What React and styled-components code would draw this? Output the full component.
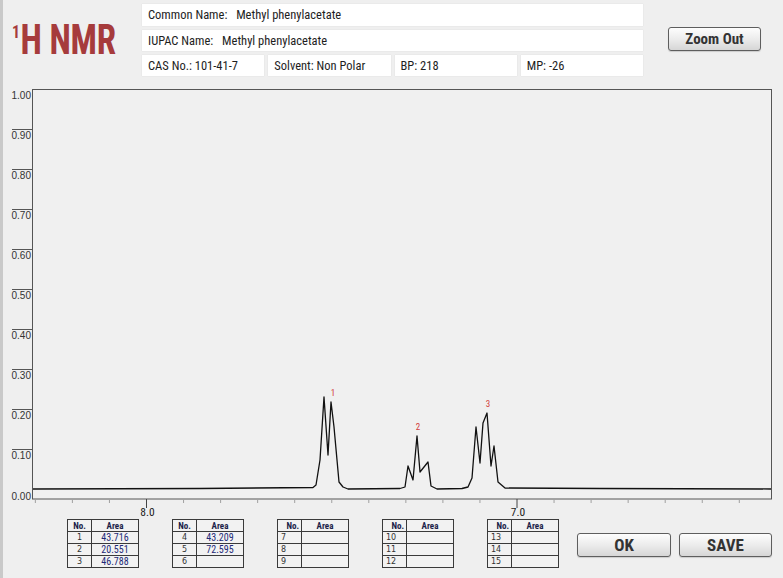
import React from 'react';
import styled, { createGlobalStyle } from 'styled-components';

const GlobalStyle = createGlobalStyle`
  html, body {
    margin: 0;
    padding: 0;
    background: #eeeeee;
  }
  body {
    font-family: "Liberation Sans Narrow", "Roboto Condensed", "Liberation Sans", sans-serif;
  }
`;

const NARROW = '"Liberation Sans Narrow", "Roboto Condensed", "Liberation Sans", sans-serif';

const Page = styled.div`
  width: 783px;
  height: 578px;
  background: #efefef;
  box-shadow: inset 3px 0 0 #c9c9c9;
  overflow: hidden;
  font-family: ${NARROW};
`;

const Header = styled.div`
  display: flex;
  padding-top: 4px;
  height: 76px;
  box-sizing: border-box;
`;

const TitleBox = styled.div`
  width: 142px;
  padding: 15px 0 0 12px;
  box-sizing: border-box;
`;

const Title = styled.h1`
  display: inline-block;
  margin: 0;
  font-family: ${NARROW};
  font-weight: 700;
  font-size: 42px;
  line-height: 42px;
  color: #a63b3c;
  letter-spacing: -0.3px;
  white-space: nowrap;
  transform: scaleX(0.83);
  transform-origin: left center;
`;

const Sup = styled.span`
  font-size: 19px;
  vertical-align: 16px;
  line-height: 0;
  margin-right: 1px;
`;

const Fields = styled.div`
  width: 501px;
  display: flex;
  flex-direction: column;
  gap: 4px;
`;

const FieldRow = styled.div`
  display: flex;
  gap: 4px;
`;

const Field = styled.div`
  flex: 1;
  height: 21px;
  background: #ffffff;
  box-shadow: 0 0 1px 0 #d6d6d6;
  padding-left: 6px;
  font-size: 12.5px;
  line-height: 22px;
  color: #1e1e1e;
  white-space: nowrap;
  overflow: hidden;
`;

const Label = styled.span`
  margin-right: 6px;
`;

const Button = styled.button`
  font-family: ${NARROW};
  font-weight: 700;
  color: #333;
  background: linear-gradient(#fdfdfd, #ececec 50%, #d6d6d6);
  border: 1px solid #5e5e5e;
  border-radius: 3px;
  box-shadow: 0 1px 1px rgba(0, 0, 0, 0.15);
  padding: 0;
  cursor: pointer;
  width: ${p => p.$w}px;
  height: ${p => p.$h}px;
  font-size: ${p => p.$fs}px;
`;

const ZoomWrap = styled.div`
  margin: 23px 0 0 25px;
`;

const Chart = styled.svg`
  display: block;
  margin-top: 4px;
`;

const Bottom = styled.div`
  display: flex;
  align-items: flex-start;
  padding-left: 67px;
  margin-top: 1px;
`;

const Tables = styled.div`
  display: flex;
  gap: 33px;
`;

const Table = styled.table`
  width: 72px;
  border-collapse: collapse;
  table-layout: fixed;
  background: #f2f2f2;
`;

const Th = styled.th`
  border: 1px solid #3a3a3a;
  height: 11px;
  padding: 0 2px;
  font-size: 9px;
  line-height: 10px;
  font-weight: 700;
  color: #1c1f4a;
  text-align: ${p => p.$align || 'center'};
`;

const NoCell = styled.td`
  border: 1px solid #3a3a3a;
  height: 11px;
  padding: 0 3px;
  font-family: "DejaVu Sans", "Liberation Sans", sans-serif;
  font-size: 8px;
  line-height: 10px;
  color: #333;
  text-align: ${p => p.$align || 'center'};
`;

const AreaCell = styled.td`
  border: 1px solid #3a3a3a;
  height: 11px;
  padding: 0;
  font-size: 10px;
  line-height: 10px;
  color: #1d2a78;
  text-align: center;
`;

const Actions = styled.div`
  display: flex;
  gap: 8px;
  margin: 14px 0 0 18px;
`;

const yToPx = v => 489 - v * 400;
const ppmToX = ppm => 146.5 + (8.0 - ppm) * 370.5;

const spectrum = [
  [33, 489], [200, 488.5], [313, 487.5], [316, 485], [320, 460], [324, 397],
  [328, 455], [331, 402], [334, 427], [339, 482], [343, 487], [348, 489],
  [400, 488.5], [405, 487], [408, 466], [413, 480], [417, 436], [420, 472],
  [428, 462], [431, 486], [437, 489], [462, 488.5], [468, 487], [472, 478],
  [476, 427], [480, 463], [483, 423], [487, 413], [491, 466], [494, 446],
  [498, 482], [505, 488], [600, 488.5], [771, 489],
];

const peakLabels = [
  { n: 1, x: 333, y: 396 },
  { n: 2, x: 418, y: 430 },
  { n: 3, x: 488, y: 407 },
];

const yTicks = [1.0, 0.9, 0.8, 0.7, 0.6, 0.5, 0.4, 0.3, 0.2, 0.1, 0.0];

const tables = [
  { rows: [[1, '43.716'], [2, '20.551'], [3, '46.788']], align: 'center' },
  { rows: [[4, '43.209'], [5, '72.595'], [6, '']], align: 'center' },
  { rows: [[7, ''], [8, ''], [9, '']], align: 'left' },
  { rows: [[10, ''], [11, ''], [12, '']], align: 'left' },
  { rows: [[13, ''], [14, ''], [15, '']], align: 'left' },
];

const Spectrum = () => {
  const ticks = [];
  for (let i = -3; i <= 16; i++) ticks.push(i);
  return (
    <Chart width="783" height="438" viewBox="0 80 783 438">
      <rect x="32.5" y="89.5" width="739" height="409.5" fill="#f0f0f0" stroke="#555" strokeWidth="1" />
      {yTicks.map(v => (
        <g key={v}>
          {v > 0 && v < 1 && (
            <line x1="12" x2="32" y1={yToPx(v) + 0.5} y2={yToPx(v) + 0.5} stroke="#555" strokeWidth="1" />
          )}
          <text
            x="31"
            y={yToPx(v) + (v === 0 ? 11 : 10)}
            textAnchor="end"
            fontFamily='"Liberation Sans", Arial, sans-serif'
            fontSize="10"
            fill="#333"
          >
            {v.toFixed(2)}
          </text>
        </g>
      ))}
      {ticks.map(i => {
        const x = ppmToX(8.0 - i * 0.1);
        const major = i === 0 || i === 10;
        return (
          <line
            key={i}
            x1={x}
            x2={x}
            y1="499"
            y2={major ? 508 : 503}
            stroke={major ? '#444' : '#a0a0a0'}
            strokeWidth="1"
          />
        );
      })}
      {[8.0, 7.0].map(p => (
        <text key={p} x={ppmToX(p) + 1} y="516" textAnchor="middle" fontFamily={NARROW} fontSize="11.5" fill="#222">
          {p.toFixed(1)}
        </text>
      ))}
      <polyline
        points={spectrum.map(p => p.join(',')).join(' ')}
        fill="none"
        stroke="#111"
        strokeWidth="1.3"
        strokeLinejoin="round"
      />
      {peakLabels.map(l => (
        <text key={l.n} x={l.x} y={l.y} textAnchor="middle" fontFamily={NARROW} fontSize="9" fill="#d23b3b">
          {l.n}
        </text>
      ))}
    </Chart>
  );
};

const AreaTable = ({ rows, align }) => (
  <Table>
    <colgroup>
      <col style={{ width: 24 }} />
      <col />
    </colgroup>
    <thead>
      <tr>
        <Th $align={align === 'left' ? 'right' : 'center'}>No.</Th>
        <Th>Area</Th>
      </tr>
    </thead>
    <tbody>
      {rows.map(([n, a]) => (
        <tr key={n}>
          <NoCell $align={align}>{n}</NoCell>
          <AreaCell>{a}</AreaCell>
        </tr>
      ))}
    </tbody>
  </Table>
);

const App = () => {
  return (
    <Page>
      <GlobalStyle />
      <Header>
        <TitleBox>
          <Title>
            <Sup>1</Sup>H NMR
          </Title>
        </TitleBox>
        <Fields>
          <Field>
            <Label>Common Name:</Label> Methyl phenylacetate
          </Field>
          <Field>
            <Label>IUPAC Name:</Label> Methyl phenylacetate
          </Field>
          <FieldRow>
            <Field>CAS No.: 101-41-7</Field>
            <Field>Solvent: Non Polar</Field>
            <Field>BP: 218</Field>
            <Field>MP: -26</Field>
          </FieldRow>
        </Fields>
        <ZoomWrap>
          <Button $w={93} $h={24} $fs={15}>Zoom Out</Button>
        </ZoomWrap>
      </Header>
      <Spectrum />
      <Bottom>
        <Tables>
          {tables.map((t, i) => (
            <AreaTable key={i} rows={t.rows} align={t.align} />
          ))}
        </Tables>
        <Actions>
          <Button $w={94} $h={24} $fs={17}>OK</Button>
          <Button $w={93} $h={24} $fs={17}>SAVE</Button>
        </Actions>
      </Bottom>
    </Page>
  );
};

export default App;
